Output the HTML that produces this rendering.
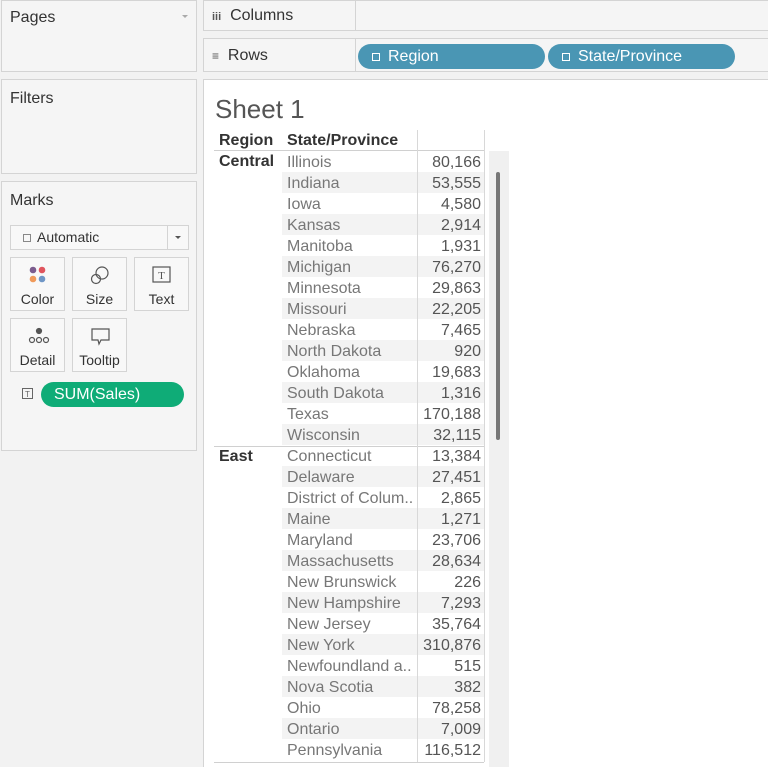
<!DOCTYPE html>
<html><head><style>
*{margin:0;padding:0;box-sizing:border-box}
body{width:768px;height:767px;background:#f2f2f2;font-family:"Liberation Sans",sans-serif;position:relative;overflow:hidden}
.box{position:absolute;background:#f5f5f5;border:1px solid #d4d4d4}
.lbl{position:absolute;font-size:16px;color:#333}
.card{position:absolute;width:55px;height:54px;border:1px solid #d4d4d4;background:#f8f8f8;font-size:14px;color:#333;text-align:center}
.card span{position:absolute;left:0;right:0;top:33px}
.pill{position:absolute;height:25px;border-radius:13px;background:#4a96b4;color:#fff;font-size:16px;line-height:25px}
.row{position:absolute;left:282px;width:202px;height:21px;font-size:16px;line-height:23px;color:#777}
.row .n{position:absolute;right:3px;color:#555}
.row .s{position:absolute;left:5px}
.sh{background:#f3f3f3}
.hd{position:absolute;font-size:16px;font-weight:bold;color:#333}
</style></head><body>
<div class="box" style="left:1px;top:0;width:196px;height:72px"><div class="lbl" style="left:8px;top:8px">Pages</div><div style="position:absolute;left:180px;top:14px;border:3px solid transparent;border-top:3px solid #aaa"></div></div>
<div class="box" style="left:1px;top:79px;width:196px;height:95px"><div class="lbl" style="left:8px;top:10px">Filters</div></div>
<div class="box" style="left:1px;top:181px;width:196px;height:270px">
<div class="lbl" style="left:8px;top:10px">Marks</div>
<div style="position:absolute;left:8px;top:43px;width:179px;height:25px;border:1px solid #d4d4d4;background:#f8f8f8;font-size:14px;color:#333;line-height:23px">
<span style="display:inline-block;width:8px;height:8px;border:1px solid #888;margin:0 6px 0 12px;vertical-align:0"></span>Automatic
<div style="position:absolute;left:156px;top:0;width:1px;height:23px;background:#d4d4d4"></div>
<div style="position:absolute;left:164px;top:10px;border:3px solid transparent;border-top:3px solid #555"></div></div>
<div class="card" style="left:8px;top:75px"><svg style="position:absolute;left:18px;top:8px" width="18" height="18"><circle cx="4" cy="4" r="3.3" fill="#7b5c8e"/><circle cx="13" cy="4" r="3.3" fill="#e0555e"/><circle cx="4" cy="13" r="3.3" fill="#f09a5a"/><circle cx="13" cy="13" r="3.3" fill="#6f96c6"/></svg><span>Color</span></div>
<div class="card" style="left:70px;top:75px"><svg style="position:absolute;left:17px;top:7px" width="20" height="20" fill="none" stroke="#555" stroke-width="1.2"><circle cx="12" cy="8" r="6"/><circle cx="6" cy="14" r="4.5"/></svg><span>Size</span></div>
<div class="card" style="left:132px;top:75px"><svg style="position:absolute;left:17px;top:8px" width="20" height="18"><rect x="1" y="1" width="17" height="15" fill="none" stroke="#555" stroke-width="1.2"/><text x="9.5" y="13" font-size="11" text-anchor="middle" fill="#555" font-family="Liberation Serif">T</text></svg><span>Text</span></div>
<div class="card" style="left:8px;top:136px"><svg style="position:absolute;left:17px;top:8px" width="22" height="18" fill="none" stroke="#555" stroke-width="1.2"><circle cx="11" cy="4" r="2.5" fill="#555"/><circle cx="4" cy="13" r="2.5"/><circle cx="11" cy="13" r="2.5"/><circle cx="18" cy="13" r="2.5"/></svg><span>Detail</span></div>
<div class="card" style="left:70px;top:136px"><svg style="position:absolute;left:17px;top:8px" width="22" height="20" fill="none" stroke="#555" stroke-width="1.2"><path d="M2 2H19V13H11L9 17L8 13H2Z"/></svg><span>Tooltip</span></div>
<svg style="position:absolute;left:20px;top:206px" width="12" height="12"><rect x="0.5" y="0.5" width="10" height="10" fill="none" stroke="#666"/><text x="5.5" y="9" font-size="8" text-anchor="middle" fill="#666">T</text></svg>
<div class="pill" style="left:39px;top:200px;width:143px;background:#0fac77;padding-left:13px;font-size:16px">SUM(Sales)</div>
</div>
<div class="box" style="left:203px;top:0;width:566px;height:31px"><div style="position:absolute;left:151px;top:0;width:1px;height:30px;background:#d4d4d4"></div><div class="lbl" style="left:8px;top:6px"><span style="font-size:11px;font-weight:bold;color:#555">iii</span>&nbsp;&nbsp;Columns</div></div>
<div class="box" style="left:203px;top:38px;width:566px;height:34px"><div style="position:absolute;left:151px;top:0;width:1px;height:33px;background:#d4d4d4"></div><div class="lbl" style="left:8px;top:8px"><span style="font-size:12px;color:#555">&#8801;</span>&nbsp;&nbsp;Rows</div>
<div class="pill" style="left:154px;top:5px;width:187px;padding-left:14px"><span style="display:inline-block;width:8px;height:8px;border:1px solid #fff;margin-right:8px;font-size:0"></span>Region</div>
<div class="pill" style="left:344px;top:5px;width:187px;padding-left:14px"><span style="display:inline-block;width:8px;height:8px;border:1px solid #fff;margin-right:8px;font-size:0"></span>State/Province</div></div>
<div style="position:absolute;left:203px;top:79px;width:566px;height:688px;background:#fff;border-left:1px solid #d4d4d4;border-top:1px solid #d4d4d4"></div>
<div style="position:absolute;left:215px;top:94px;font-size:26px;color:#555">Sheet 1</div>
<div class="hd" style="left:219px;top:132px">Region</div>
<div class="hd" style="left:287px;top:132px">State/Province</div>
<div style="position:absolute;left:214px;top:150px;width:270px;height:1px;background:#d0d0d0"></div>
<div style="position:absolute;left:489px;top:151px;width:20px;height:616px;background:#f0f0f0"></div>
<div style="position:absolute;left:496px;top:172px;width:4px;height:268px;background:#777;border-radius:2px"></div>
<div id="t"></div>
<div class="hd" style="left:219px;top:153px">Central</div>
<div class="hd" style="left:219px;top:448px">East</div>
<div style="position:absolute;left:214px;top:446px;width:270px;height:1px;background:#d0d0d0"></div>
<div style="position:absolute;left:214px;top:762px;width:270px;height:1px;background:#d0d0d0"></div>
<div style="position:absolute;left:417px;top:130px;width:1px;height:632px;background:#d8d8d8"></div>
<div style="position:absolute;left:484px;top:130px;width:1px;height:632px;background:#d8d8d8"></div>
<script>
var d=[["Illinois","80,166"],["Indiana","53,555"],["Iowa","4,580"],["Kansas","2,914"],["Manitoba","1,931"],["Michigan","76,270"],["Minnesota","29,863"],["Missouri","22,205"],["Nebraska","7,465"],["North Dakota","920"],["Oklahoma","19,683"],["South Dakota","1,316"],["Texas","170,188"],["Wisconsin","32,115"],["Connecticut","13,384"],["Delaware","27,451"],["District of Colum..","2,865"],["Maine","1,271"],["Maryland","23,706"],["Massachusetts","28,634"],["New Brunswick","226"],["New Hampshire","7,293"],["New Jersey","35,764"],["New York","310,876"],["Newfoundland a..","515"],["Nova Scotia","382"],["Ohio","78,258"],["Ontario","7,009"],["Pennsylvania","116,512"]];
var h="";for(var i=0;i<d.length;i++){h+='<div class="row'+(i%2?' sh':'')+'" style="top:'+(151+i*21)+'px"><span class="s">'+d[i][0]+'</span><span class="n">'+d[i][1]+'</span></div>';}
document.getElementById("t").innerHTML=h;
</script>
</body></html>
